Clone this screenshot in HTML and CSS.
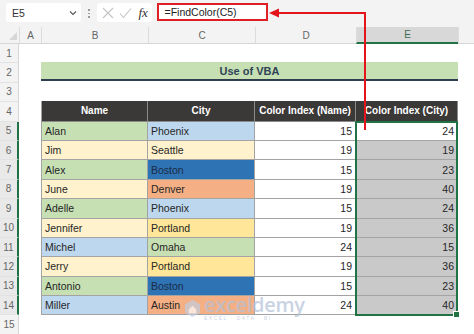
FILE: index.html
```html
<!DOCTYPE html>
<html lang="en">
<head>
    <meta charset="UTF-8">
    <meta name="viewport" content="width=device-width, initial-scale=1.0">
    <title>Use of VBA - FindColor</title>
    <link rel="stylesheet" href="styles.css">
</head>
<body>
    <div class="page">
        <div class="formula-bar">
            <div class="name-box">
                <span>E5</span>
                <svg width="8" height="6" viewBox="0 0 8 6"><path d="M1 1.5 L4 4.5 L7 1.5" fill="none" stroke="#555" stroke-width="1.1"/></svg>
            </div>
            <div class="grip"><i></i><i></i><i></i></div>
            <div class="fx-box">
                <svg width="12" height="12" viewBox="0 0 12 12"><path d="M1 1 L11 11 M11 1 L1 11" stroke="#c4c4c4" stroke-width="1.1"/></svg>
                <svg width="13" height="12" viewBox="0 0 13 12"><path d="M1 6.5 L4.5 10.5 L12 1.5" fill="none" stroke="#c4c4c4" stroke-width="1.1"/></svg>
                <span class="fx">fx</span>
            </div>
            <div class="formula">=FindColor(C5)</div>
        </div>

        <div class="sheet" id="sheet">
            <div class="corner"><svg width="8" height="8" viewBox="0 0 8 8"><path d="M8 0 V8 H0 Z" fill="#d6d6d6"/></svg></div>
            <div class="ch">A</div>
            <div class="ch">B</div>
            <div class="ch">C</div>
            <div class="ch">D</div>
            <div class="ch ch-active">E</div>
            <div class="ch ch-last"></div>
            <!-- rows are added by the script below -->
            <div class="selection"></div>
            <div class="watermark">
                <svg width="17" height="19" viewBox="0 0 18 20"><path d="M9 1 L17 5.5 V14.5 L9 19 L1 14.5 V5.5 Z" fill="#c3cde0"/><path d="M5 11 L9 7 L13 11 V15 H5 Z" fill="#fff"/></svg>
                <div class="wm-text">
                    <span class="wm-name">exceldemy</span>
                    <span class="wm-sub">EXCEL · DATA · BI</span>
                </div>
            </div>
        </div>

        <svg class="arrow" width="474" height="334" viewBox="0 0 474 334">
            <path d="M365 130 V13 H277" fill="none" stroke="#e3141c" stroke-width="2"/>
            <polygon points="269,13 279,8.5 279,17.5" fill="#e3141c"/>
        </svg>
    </div>

    <script>
        const people = [
            { name: "Alan", nameColor: "green", city: "Phoenix", cityColor: "sky", byName: 15, byCity: 24 },
            { name: "Jim", nameColor: "cream", city: "Seattle", cityColor: "cream", byName: 19, byCity: 19 },
            { name: "Alex", nameColor: "green", city: "Boston", cityColor: "blue", byName: 15, byCity: 23 },
            { name: "June", nameColor: "cream", city: "Denver", cityColor: "orange", byName: 19, byCity: 40 },
            { name: "Adelle", nameColor: "green", city: "Phoenix", cityColor: "sky", byName: 15, byCity: 24 },
            { name: "Jennifer", nameColor: "cream", city: "Portland", cityColor: "gold", byName: 19, byCity: 36 },
            { name: "Michel", nameColor: "sky", city: "Omaha", cityColor: "green", byName: 24, byCity: 15 },
            { name: "Jerry", nameColor: "cream", city: "Portland", cityColor: "gold", byName: 19, byCity: 36 },
            { name: "Antonio", nameColor: "green", city: "Boston", cityColor: "blue", byName: 15, byCity: 23 },
            { name: "Miller", nameColor: "sky", city: "Austin", cityColor: "orange", byName: 24, byCity: 40 }
        ];

        function emptyRow(n) {
            return `<div class="rh">${n}</div>` + '<div class="cell"></div>'.repeat(6);
        }

        function buildSheet() {
            const sheet = document.getElementById('sheet');
            let html = emptyRow(1);
            html += `<div class="rh">2</div><div class="cell"></div>
                <div class="cell title">Use of VBA</div><div class="cell"></div>`;
            html += emptyRow(3);
            html += `<div class="rh">4</div><div class="cell"></div>
                <div class="cell th th-first">Name</div>
                <div class="cell th">City</div>
                <div class="cell th">Color Index (Name)</div>
                <div class="cell th">Color Index (City)</div>
                <div class="cell"></div>`;
            people.forEach((p, i) => {
                const shaded = i === 0 ? 'num-active' : 'num-shaded';
                html += `<div class="rh rh-sel">${i + 5}</div><div class="cell"></div>
                    <div class="cell td td-first ${p.nameColor}">${p.name}</div>
                    <div class="cell td ${p.cityColor}">${p.city}</div>
                    <div class="cell td num">${p.byName}</div>
                    <div class="cell td num ${shaded}">${p.byCity}</div>
                    <div class="cell"></div>`;
            });
            html += emptyRow(15);
            sheet.querySelector('.ch-last').insertAdjacentHTML('afterend', html);
        }

        buildSheet();
    </script>
</body>
</html>
```

FILE: styles.css
```css
body {
    margin: 0;
    background: #fff;
    font-family: "Liberation Sans", Arial, sans-serif;
    color: #262626;
}
.page {
    position: relative;
    width: 474px;
    height: 334px;
    overflow: hidden;
}
.formula-bar {
    display: flex;
    align-items: flex-start;
    height: 27px;
    padding-top: 3px;
    box-sizing: border-box;
    background: #f3f3f3;
}
.name-box {
    display: flex;
    align-items: center;
    justify-content: space-between;
    width: 75px;
    height: 19px;
    margin-left: 6px;
    padding: 0 4px 0 6px;
    box-sizing: border-box;
    background: #fff;
    border-radius: 3px;
    font-size: 10.5px;
    color: #333;
}
.grip {
    display: flex;
    flex-direction: column;
    gap: 2px;
    margin: 6px 7px 0 7px;
}
.grip i {
    display: block;
    width: 1.5px;
    height: 1.5px;
    background: #9a9a9a;
}
.fx-box {
    display: flex;
    align-items: center;
    gap: 5px;
    width: 55px;
    height: 19px;
    padding-left: 5px;
    box-sizing: border-box;
    background: #fff;
    border-radius: 3px;
}
.fx {
    font-family: "Liberation Serif", serif;
    font-style: italic;
    font-size: 13px;
    color: #333;
    margin-left: 2px;
}
.formula {
    width: 111px;
    height: 18px;
    margin-left: 5px;
    padding-left: 6px;
    box-sizing: border-box;
    border: 2px solid #e01e26;
    background: #fff;
    font-size: 10.5px;
    line-height: 14px;
    color: #222;
}
.sheet {
    position: relative;
    display: grid;
    grid-template-columns: 19px 22px 107px 107px 101px 102px 1fr;
    grid-template-rows: 17px repeat(15, 19.4px);
}
.corner, .ch, .rh {
    background: #f3f3f3;
    color: #666;
    font-size: 10px;
    display: flex;
    align-items: center;
    justify-content: center;
}
.corner {
    align-items: flex-end;
    justify-content: flex-end;
    padding: 0 2px 3px 0;
    border-bottom: 1px solid #d6d6d6;
}
.ch {
    border-left: 1px solid #dcdcdc;
    border-bottom: 1px solid #d6d6d6;
}
.ch-active {
    background: #d8d8d8;
    color: #3d6b52;
    border-bottom: 2px solid #217346;
}
.rh {
    border-bottom: 1px solid #e2e2e2;
    border-right: 1px solid #d6d6d6;
}
.rh-sel {
    background: #e9e9e9;
    border-right: 2px solid #217346;
}
.cell {
    display: flex;
    align-items: center;
    min-width: 0;
    padding: 0 3px;
    box-sizing: border-box;
    overflow: hidden;
    white-space: nowrap;
    font-size: 10.5px;
}
.title {
    grid-column: 3 / 7;
    justify-content: center;
    margin-top: -1px;
    margin-bottom: 2px;
    background: #c6e0b4;
    border-bottom: 2px solid #2f3e4f;
    font-weight: bold;
    font-size: 11px;
    color: #2f4356;
}
.th {
    justify-content: center;
    margin-top: -1px;
    background: #3b3838;
    color: #fff;
    font-weight: bold;
    font-size: 10px;
    border-right: 1px solid #8a8a8a;
    border-bottom: 1px solid #8a8a8a;
}
.td {
    border-right: 1px solid #a3a3a3;
    border-bottom: 1px solid #a3a3a3;
}
.td-first, .th-first {
    border-left: 1px solid #a3a3a3;
}
.num {
    justify-content: flex-end;
}
.num-shaded {
    background: #c9c9c9;
}
.num-active {
    background: #fff;
}
.green { background: #c6e0b4; }
.cream { background: #fff2cc; }
.sky { background: #bdd7ee; }
.blue { background: #2e74b5; color: #1c2b45; }
.orange { background: #f4b084; }
.gold { background: #ffe699; }
.selection {
    position: absolute;
    grid-column: 6 / 7;
    grid-row: 6 / 16;
    top: -1px;
    left: -1px;
    bottom: -1px;
    width: 103px;
    box-sizing: border-box;
    border: 2px solid #217346;
    pointer-events: none;
}
.selection::after {
    content: "";
    position: absolute;
    right: -4px;
    bottom: -4px;
    width: 5px;
    height: 5px;
    background: #217346;
    border: 1px solid #fff;
}
.watermark {
    position: absolute;
    top: 268px;
    left: 184px;
    display: flex;
    align-items: center;
    gap: 3px;
    opacity: 0.7;
    pointer-events: none;
}
.wm-text {
    display: flex;
    flex-direction: column;
    line-height: 1;
}
.wm-name {
    font-family: "Open Sans", sans-serif;
    font-size: 20px;
    font-weight: 600;
    color: #b3c1d8;
    letter-spacing: -0.3px;
}
.wm-sub {
    font-size: 5px;
    letter-spacing: 1.5px;
    color: #b3c1d8;
    margin-top: 1px;
}
.arrow {
    position: absolute;
    top: 0;
    left: 0;
    pointer-events: none;
}
```
